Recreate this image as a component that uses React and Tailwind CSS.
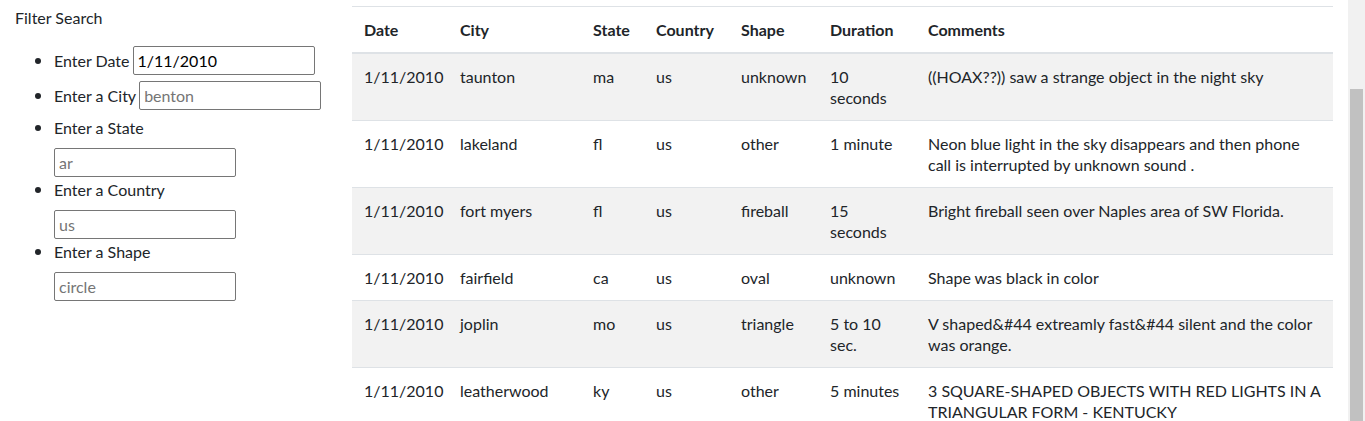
const rows = [
  ['1/11/2010', 'taunton', 'ma', 'us', 'unknown', '10 seconds', '((HOAX??)) saw a strange object in the night sky'],
  ['1/11/2010', 'lakeland', 'fl', 'us', 'other', '1 minute', 'Neon blue light in the sky disappears and then phone call is interrupted by unknown sound .'],
  ['1/11/2010', 'fort myers', 'fl', 'us', 'fireball', '15 seconds', 'Bright fireball seen over Naples area of SW Florida.'],
  ['1/11/2010', 'fairfield', 'ca', 'us', 'oval', 'unknown', 'Shape was black in color'],
  ['1/11/2010', 'joplin', 'mo', 'us', 'triangle', '5 to 10 sec.', 'V shaped&#44 extreamly fast&#44 silent and the color was orange.'],
  ['1/11/2010', 'leatherwood', 'ky', 'us', 'other', '5 minutes', '3 SQUARE-SHAPED OBJECTS WITH RED LIGHTS IN A TRIANGULAR FORM - KENTUCKY'],
];

const heads = ['Date', 'City', 'State', 'Country', 'Shape', 'Duration', 'Comments'];
const widths = ['w-[96px]', 'w-[133px]', 'w-[63px]', 'w-[85px]', 'w-[89px]', 'w-[98px]', ''];

function Bullet() {
  return <span className="w-[6px] h-[6px] rounded-full bg-[#212529] shrink-0 ml-[35px] mr-[13px]" />;
}

function Field({ placeholder, value }) {
  return (
    <input
      className="w-[182px] h-[29px] shrink-0 border border-[#767676] rounded-[2px] px-[4px] text-[16px] text-black placeholder:text-[#757575] outline-none bg-white"
      placeholder={placeholder}
      defaultValue={value}
    />
  );
}

export default function App() {
  return (
    <div className="h-[421px] overflow-hidden flex bg-white text-[#212529] text-[16px] leading-[21px]" style={{ fontFamily: 'Lato, "Noto Sans", sans-serif' }}>
      <div className="flex-1 flex">
        {/* FILTERS */}
        <div className="w-[337px] px-[15px] pt-[7px]">
          <p>Filter Search</p>
          <ul className="mt-[15px]">
            <li className="flex items-center h-[35px] -ml-[15px] whitespace-nowrap">
              <Bullet />
              <span className="mr-[3px]">Enter Date</span>
              <Field value="1/11/2010" />
            </li>
            <li className="flex items-center h-[35px] -ml-[15px] whitespace-nowrap">
              <Bullet />
              <span className="mr-[3px]">Enter a City</span>
              <Field placeholder="benton" />
            </li>
            {[['Enter a State', 'ar'], ['Enter a Country', 'us'], ['Enter a Shape', 'circle']].map(([label, ph]) => (
              <li key={label} className="-ml-[15px] pt-[4px]">
                <div className="flex items-center h-[21px]">
                  <Bullet />
                  <span>{label}</span>
                </div>
                <div className="pl-[54px] mt-[10px] mb-[-2px]">
                  <Field placeholder={ph} />
                </div>
              </li>
            ))}
          </ul>
        </div>

        {/* TABLE */}
        <div className="w-[1011px] px-[15px] pt-[6px]">
          <table className="w-full table-fixed border-collapse">
            <thead>
              <tr>
                {heads.map((h, i) => (
                  <th key={h} className={`${widths[i]} text-left font-bold px-[12px] py-[12px] border-t border-[#dee2e6] border-b-2`}>{h}</th>
                ))}
              </tr>
            </thead>
            <tbody>
              {rows.map((r, ri) => (
                <tr key={ri} className={ri % 2 === 0 ? 'bg-[#f2f2f2]' : 'bg-white'}>
                  {r.map((c, ci) => (
                    <td key={ci} className="align-top px-[12px] py-[12px] border-t border-[#dee2e6]">{c}</td>
                  ))}
                </tr>
              ))}
            </tbody>
          </table>
        </div>
      </div>

      {/* scrollbar */}
      <div className="w-[17px] bg-[#f1f1f1] flex flex-col">
        <div className="mt-[89px] mx-[2px] flex-1 bg-[#c1c1c1]" />
      </div>
    </div>
  );
}
